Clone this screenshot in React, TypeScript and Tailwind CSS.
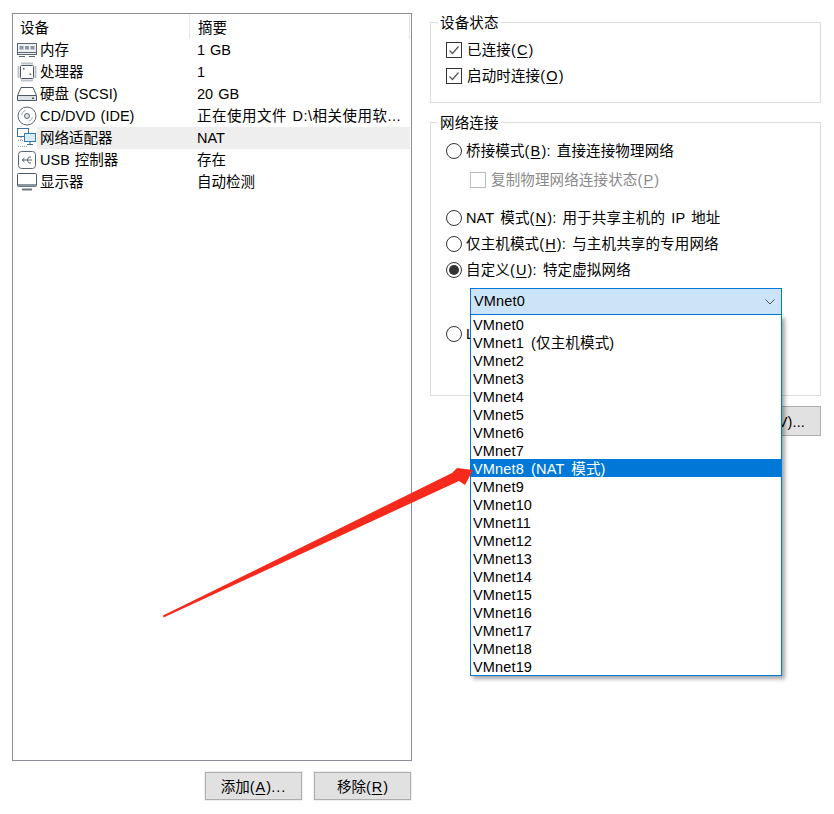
const FONT = "font-['Liberation_Sans','Noto_Sans_CJK_SC',sans-serif]";

function IconRam() {
  return (
    <svg width="20" height="16" viewBox="0 0 20 16" fill="none">
      <rect x="0.5" y="1.5" width="19" height="11" fill="#eef1f4" stroke="#5b6670" />
      <rect x="2.5" y="4" width="4" height="3.5" fill="#8b97a3" />
      <rect x="8" y="4" width="4" height="3.5" fill="#8b97a3" />
      <rect x="13.5" y="4" width="4" height="3.5" fill="#8b97a3" />
      <path d="M1 10.5h18M2 14.5h6M12 14.5h6" stroke="#5b6670" />
    </svg>
  );
}

function IconCpu() {
  return (
    <svg width="20" height="20" viewBox="0 0 20 20" fill="none">
      <rect x="3.5" y="3.5" width="13" height="13" rx="1" fill="#fff" stroke="#4d5862" />
      <rect x="6" y="6" width="1.5" height="1.5" fill="#4d5862" />
      <rect x="12.5" y="11.5" width="1.5" height="1.5" fill="#4d5862" />
      <path
        d="M5 0.5v2M7 0.5v2M9 0.5v2M11 0.5v2M13 0.5v2M15 0.5v2M5 17.5v2M7 17.5v2M9 17.5v2M11 17.5v2M13 17.5v2M15 17.5v2M0.5 5h2M0.5 7h2M0.5 9h2M0.5 11h2M0.5 13h2M0.5 15h2M17.5 5h2M17.5 7h2M17.5 9h2M17.5 11h2M17.5 13h2M17.5 15h2"
        stroke="#7c8791"
      />
    </svg>
  );
}

function IconDisk() {
  return (
    <svg width="20" height="16" viewBox="0 0 20 16" fill="none">
      <path d="M4 1.5h12l3.5 8v5H0.5v-5z" fill="#fff" stroke="#4d5862" />
      <path d="M1 9.5h18" stroke="#4d5862" />
      <rect x="1" y="10" width="18" height="4" fill="#dfe3e7" />
      <rect x="15" y="11.5" width="2" height="1.5" fill="#4d5862" />
    </svg>
  );
}

function IconCd() {
  return (
    <svg width="20" height="20" viewBox="0 0 20 20" fill="none">
      <circle cx="10" cy="10" r="9" fill="#fff" stroke="#5b6670" />
      <circle cx="10" cy="10" r="2.5" fill="#dfe3e7" stroke="#5b6670" />
      <path d="M4.5 9a6 6 0 0 1 4-4.5M15.5 11a6 6 0 0 1-4 4.5" stroke="#a4adb5" />
    </svg>
  );
}

function IconNetwork() {
  return (
    <svg width="20" height="20" viewBox="0 0 20 20" fill="none">
      <rect x="0.5" y="0.5" width="11" height="8" fill="#fff" stroke="#3f6f98" />
      <rect x="7.5" y="5.5" width="11" height="8" fill="#d9ecf8" stroke="#2f7fb5" />
      <path d="M13 13.5v3M10 16.5h6" stroke="#2f6f9a" />
      <path d="M4 9v3M1 12.5h5M1 18.5h9" stroke="#8b97a3" strokeDasharray="1 1" />
    </svg>
  );
}

function IconUsb() {
  return (
    <svg width="20" height="20" viewBox="0 0 20 20" fill="none">
      <rect x="1.5" y="1.5" width="17" height="17" rx="3" fill="#fff" stroke="#5b6670" />
      <path d="M5 10h10M7.5 8 5 10l2.5 2M10 10l2-3h2M10 10l2 3h2" stroke="#5b6670" />
    </svg>
  );
}

function IconMonitor() {
  return (
    <svg width="20" height="18" viewBox="0 0 20 18" fill="none">
      <rect x="0.5" y="0.5" width="19" height="13" rx="1" fill="#fff" stroke="#4d5862" />
      <rect x="1" y="11" width="18" height="2.5" fill="#8b97a3" />
      <rect x="5" y="15.5" width="10" height="2" fill="#6c7782" />
    </svg>
  );
}

const DEVICES = [
  { icon: <IconRam />, name: "内存", summary: "1 GB" },
  { icon: <IconCpu />, name: "处理器", summary: "1" },
  { icon: <IconDisk />, name: "硬盘 (SCSI)", summary: "20 GB" },
  { icon: <IconCd />, name: "CD/DVD (IDE)", summary: "正在使用文件 D:\\相关使用软...", wide: true },
  { icon: <IconNetwork />, name: "网络适配器", summary: "NAT", active: true },
  { icon: <IconUsb />, name: "USB 控制器", summary: "存在" },
  { icon: <IconMonitor />, name: "显示器", summary: "自动检测" },
];

const VMNETS = [
  "VMnet0",
  "VMnet1 (仅主机模式)",
  "VMnet2",
  "VMnet3",
  "VMnet4",
  "VMnet5",
  "VMnet6",
  "VMnet7",
  "VMnet8 (NAT 模式)",
  "VMnet9",
  "VMnet10",
  "VMnet11",
  "VMnet12",
  "VMnet13",
  "VMnet14",
  "VMnet15",
  "VMnet16",
  "VMnet17",
  "VMnet18",
  "VMnet19",
];

function Hotkey({ k }: { k: string }) {
  return (
    <>
      (<span className="px-[1px] underline underline-offset-2">{k}</span>)
    </>
  );
}

function Radio({ checked }: { checked?: boolean }) {
  return (
    <span className="flex h-4 w-4 shrink-0 items-center justify-center rounded-full border border-[#333] bg-white">
      {checked && <span className="h-2.5 w-2.5 rounded-full bg-[#333]" />}
    </span>
  );
}

function Checkbox({ checked, disabled }: { checked?: boolean; disabled?: boolean }) {
  return (
    <span
      className={
        disabled
          ? "flex h-4 w-4 shrink-0 border border-[#bcbcbc] bg-white"
          : "flex h-4 w-4 shrink-0 items-center justify-center border border-[#333] bg-white"
      }
    >
      {checked && (
        <svg width="12" height="12" viewBox="0 0 12 12" fill="none">
          <path d="M1.5 6.5 4.5 9.5 10.5 2.5" stroke="#555" strokeWidth="1.2" />
        </svg>
      )}
    </span>
  );
}

function Group({ title, className, children }: { title: string; className: string; children: React.ReactNode }) {
  return (
    <div className={`relative border border-[#dcdcdc] ${className}`}>
      <span className="absolute -top-[10px] left-[7px] bg-white px-[2px] leading-5">{title}</span>
      {children}
    </div>
  );
}

function Button({ children }: { children: React.ReactNode }) {
  return (
    <button className="flex h-[28px] w-[97px] items-center justify-center border border-[#adadad] bg-[#e1e1e1] pt-[2px] leading-none outline outline-1 outline-[#efefef]">
      {children}
    </button>
  );
}

export default function App() {
  return (
    <div className={`relative flex h-[814px] w-[834px] overflow-hidden bg-white text-[14.5px] text-black ${FONT}`}>
      <div className="ml-3 mt-[13px] w-[400px]">
        <div className="h-[748px] border border-[#8a8d96] pt-[1px]">
          <div className="flex h-[24px] items-center">
            <span className="h-full w-[177px] border-r border-[#e5e5e5] pl-[7px] pt-[1px] leading-[24px]">设备</span>
            <span className="h-full flex-1 border-r border-[#e5e5e5] pl-[8px] pt-[1px] leading-[24px]">摘要</span>
            <span className="w-[1px]" />
          </div>
          {DEVICES.map((d) => (
            <div key={d.name} className="flex h-[22px] items-center whitespace-nowrap [word-spacing:1px]">
              <span className="flex w-[24px] shrink-0 justify-center pl-[3px]">{d.icon}</span>
              <div className={d.active ? "mr-[1px] flex h-full flex-1 items-center bg-[#eeeeee]" : "flex h-full flex-1 items-center"}>
                <span className="w-[160px] pl-[3px] pt-[2px]">{d.name}</span>
                <span className={d.wide ? "pt-[2px] tracking-[0.5px]" : "pt-[2px]"}>{d.summary}</span>
              </div>
            </div>
          ))}
        </div>
        <div className="mt-[11px] flex justify-end gap-[12px] pr-[1px]">
          <Button>
            添加<Hotkey k="A" />
            <span className="tracking-[1px]">...</span>
          </Button>
          <Button>
            移除<Hotkey k="R" />
          </Button>
        </div>
      </div>

      <div className="ml-[18px] mt-[22px] w-[391px] tracking-[0.15px] [word-spacing:2px]">
        <Group title="设备状态" className="h-[81px]">
          <div className="flex flex-col gap-[4px] pl-[15px] pt-[16px]">
            <label className="flex h-[22px] items-center gap-[5px]">
              <Checkbox checked />
              <span className="pt-[2px]">
                已连接<Hotkey k="C" />
              </span>
            </label>
            <label className="flex h-[22px] items-center gap-[5px]">
              <Checkbox checked />
              <span className="pt-[2px]">
                启动时连接<Hotkey k="O" />
              </span>
            </label>
          </div>
        </Group>

        <Group title="网络连接" className="mt-[19px] h-[274px]">
          <div className="flex flex-col pl-[15px] pt-[17px]">
            <label className="flex h-[22px] items-center gap-[4px]">
              <Radio />
              <span className="pt-[1px]">
                桥接模式<Hotkey k="B" />: 直接连接物理网络
              </span>
            </label>
            <label className="mt-[7px] flex h-[22px] items-center gap-[5px] pl-[24px] text-[#8a8a8a]">
              <Checkbox disabled />
              <span className="pt-[1px]">
                复制物理网络连接状态<Hotkey k="P" />
              </span>
            </label>
            <label className="mt-[16px] flex h-[22px] items-center gap-[4px]">
              <Radio />
              <span className="pt-[1px]">
                NAT 模式<Hotkey k="N" />: 用于共享主机的 IP 地址
              </span>
            </label>
            <label className="mt-[4px] flex h-[22px] items-center gap-[4px]">
              <Radio />
              <span className="pt-[1px]">
                仅主机模式<Hotkey k="H" />: 与主机共享的专用网络
              </span>
            </label>
            <label className="mt-[4px] flex h-[22px] items-center gap-[4px]">
              <Radio checked />
              <span className="pt-[1px]">
                自定义<Hotkey k="U" />: 特定虚拟网络
              </span>
            </label>
            <label className="mt-[42px] flex h-[22px] items-center gap-[4px]">
              <Radio />
              <span className="pt-[1px]">LAN</span>
            </label>
          </div>
        </Group>

        <div className="mt-[10px] flex justify-end">
          <button className="flex h-[30px] w-[150px] items-center justify-end border border-[#adadad] bg-[#e1e1e1] pr-[15px] pt-[2px] leading-none">
            (V)...
          </button>
        </div>
      </div>

      {/* open dropdown lying over the network group */}
      <div className="absolute left-[470px] top-[288px] w-[312px] tracking-[0.15px] [word-spacing:3px]">
        <div className="flex h-[27px] items-center justify-between border border-[#0078d7] bg-[#cce4f7] pl-[3px] pr-[6px]">
          <span className="pt-[1px]">VMnet0</span>
          <svg width="10" height="6" viewBox="0 0 10 6" fill="none">
            <path d="M0.5 0.5 5 5l4.5-4.5" stroke="#555" />
          </svg>
        </div>
        <div className="border border-t-0 border-[#0078d7] bg-white shadow-[3px_3px_4px_rgba(0,0,0,0.35)]">
          {VMNETS.map((n) => (
            <div
              key={n}
              className={
                n.startsWith("VMnet8")
                  ? "h-[18px] whitespace-nowrap bg-[#0078d7] pl-[2px] leading-[20px] text-white"
                  : "h-[18px] whitespace-nowrap pl-[2px] leading-[20px]"
              }
            >
              {n}
            </div>
          ))}
        </div>
      </div>

      {/* red annotation arrow */}
      <svg className="absolute left-0 top-0" width="834" height="814" viewBox="0 0 834 814" fill="none">
        <polygon points="163,615.5 452,473 457,468 473,470 465,485 459,481 163.5,617.5" fill="#f5291c" />
      </svg>
    </div>
  );
}
